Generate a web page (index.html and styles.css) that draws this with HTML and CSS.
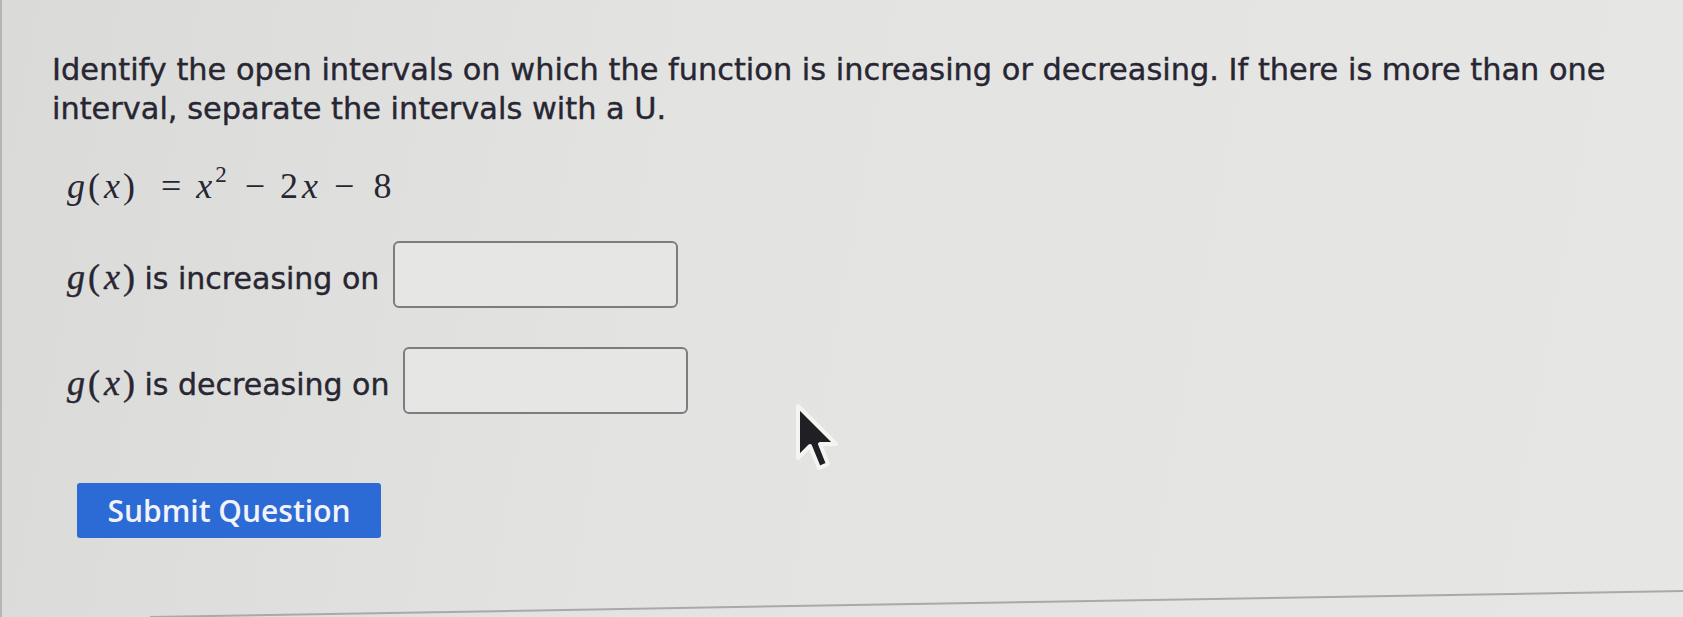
FILE: index.html
```html
<!DOCTYPE html>
<html>
<head>
<meta charset="utf-8">
<link rel="stylesheet" href="styles.css">
</head>
<body>
<div class="page">
  <div class="question">
    <p class="prompt">Identify the open intervals on which the function is increasing or decreasing. If there is more than one interval, separate the intervals with a U.</p>
    <div class="formula"><span class="mi g">g</span><span class="mo lp">(</span><span class="mi xv">x</span><span class="mo rp">)</span><span class="rel">=</span><span class="mi">x</span><sup class="sup">2</sup><span class="bin b1">−</span><span class="mn">2</span><span class="mi x2">x</span><span class="bin b2">−</span><span class="mn">8</span></div>
    <div class="row">
      <span class="label"><span class="mi g">g</span><span class="mo lp">(</span><span class="mi xv">x</span><span class="mo rp">)</span> is increasing on</span>
      <span class="answer"></span>
    </div>
    <div class="row">
      <span class="label"><span class="mi g">g</span><span class="mo lp">(</span><span class="mi xv">x</span><span class="mo rp">)</span> is decreasing on</span>
      <span class="answer"></span>
    </div>
    <button class="submit">Submit Question</button>
  </div>
  <svg class="cursor" width="46" height="72" viewBox="0 0 46 72">
    <path d="M4 4 L4 56 L16 44 L25 66 L34 62 L26 42 L42 42 Z" fill="#1f1f24" stroke="#f4f4f2" stroke-width="4" stroke-linejoin="round"/>
  </svg>
  <svg class="edge" width="1683" height="617" viewBox="0 0 1683 617">
    <line x1="150" y1="617" x2="1683" y2="591" stroke="#a9aaa8" stroke-width="2"/>
    <line x1="1" y1="0" x2="1" y2="617" stroke="#b5b6b3" stroke-width="2"/>
  </svg>
</div>
</body>
</html>
```
FILE: styles.css
```css
html, body {
  margin: 0;
  padding: 0;
  background: #e3e4e1;
}
.page {
  position: relative;
  width: 1683px;
  height: 617px;
  overflow: hidden;
  background: linear-gradient(100deg, #dadbd9 0%, #e3e4e1 40%, #e6e7e4 100%);
}
.question {
  padding: 50px 0 0 52px;
  font-family: "DejaVu Sans", "Verdana", sans-serif;
  color: #282633;
}
.prompt {
  margin: 0;
  font-size: 30.4px;
  line-height: 39px;
  width: 1600px;
  -webkit-text-stroke: 0.4px #282633;
}
.formula {
  margin: 38px 0 0 15px;
  line-height: 40px;
  font-family: "Liberation Serif", serif;
  font-size: 36px;
}
.mi {
  font-family: "Liberation Serif", serif;
  font-style: italic;
  font-size: 36px;
}
.mo, .mn, .rel, .bin {
  font-family: "Liberation Serif", serif;
  font-size: 36px;
}
.g { margin-right: 3px; }
.lp { margin-right: 4px; }
.rp { margin-left: 3px; }
.rel { margin: 0 15px 0 26px; }
.sup {
  font-family: "Liberation Serif", serif;
  font-size: 23px;
  vertical-align: 16px;
  line-height: 0;
  margin-left: 3px;
}
.b1 { margin: 0 15px 0 18px; }
.x2 { margin-left: 4px; }
.b2 { margin: 0 19px 0 16px; }
.row {
  display: flex;
  align-items: center;
  gap: 14px;
  margin: 35px 0 0 15px;
}
.row + .row {
  margin-top: 39px;
}
.label {
  font-size: 30px;
  line-height: 40px;
  padding-top: 6px;
  white-space: nowrap;
  -webkit-text-stroke: 0.4px #282633;
}
.answer {
  display: block;
  width: 281px;
  height: 63px;
  border: 2px solid #7c7d80;
  border-radius: 6px;
  background: #e6e7e4;
}
.submit {
  display: block;
  margin: 69px 0 0 25px;
  width: 304px;
  height: 55px;
  border: none;
  border-radius: 3px;
  background: #2c6ad5;
  color: #f1f3f8;
  font-family: "Open Sans", sans-serif;
  font-weight: 600;
  font-size: 30px;
  padding: 0;
}
.cursor {
  position: absolute;
  left: 794px;
  top: 402px;
}
.edge {
  position: absolute;
  left: 0;
  top: 0;
  pointer-events: none;
}
```
